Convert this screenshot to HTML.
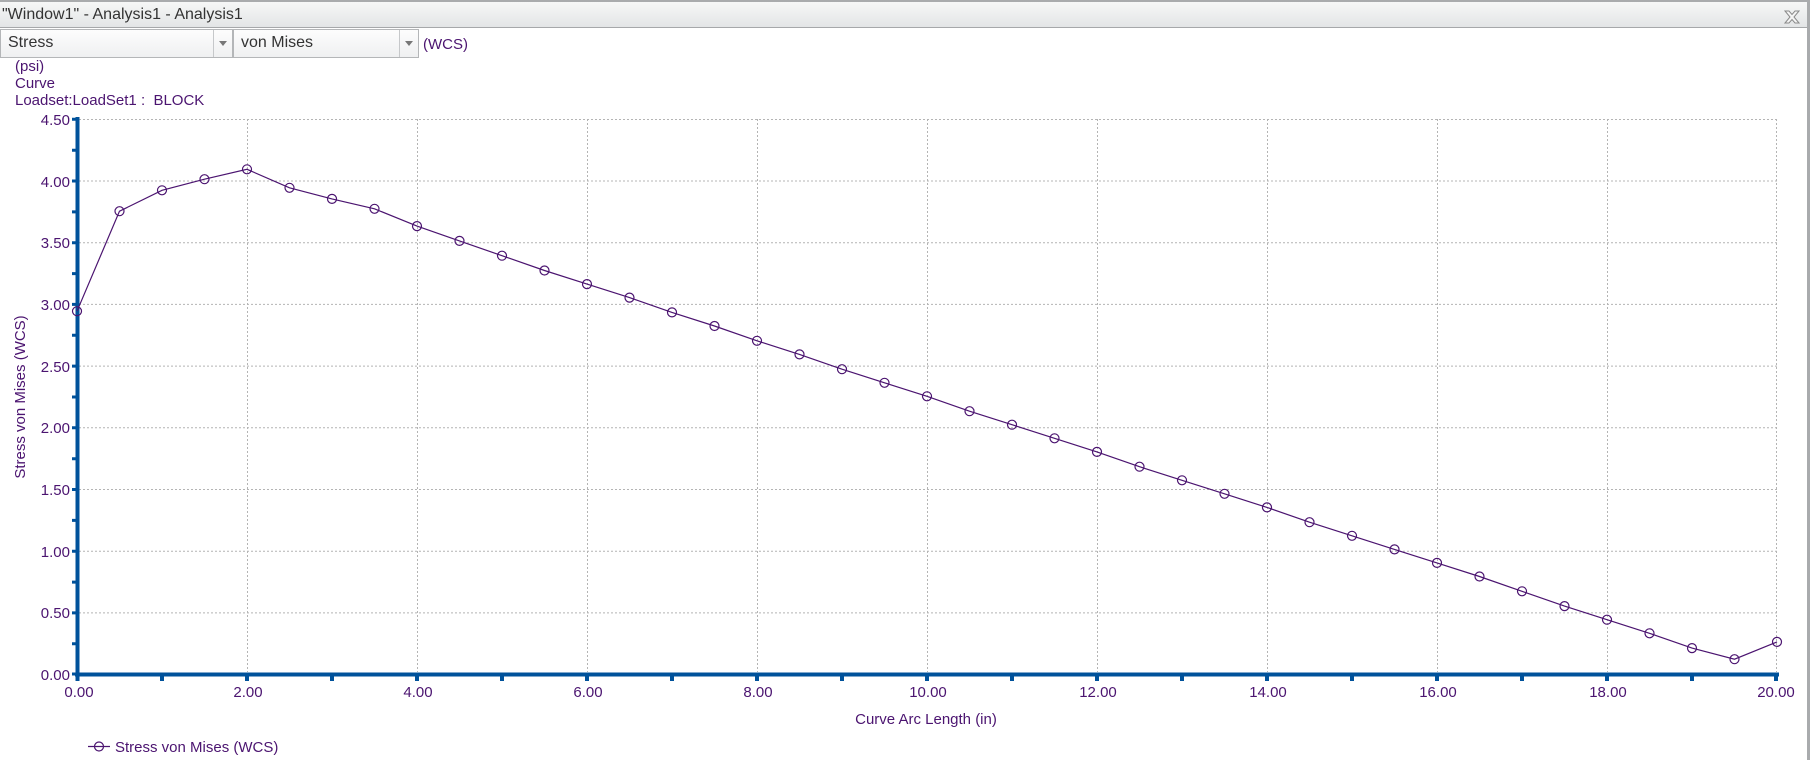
<!DOCTYPE html>
<html><head><meta charset="utf-8"><style>
html,body{margin:0;padding:0;width:1810px;height:760px;overflow:hidden;background:#fff;font-family:"Liberation Sans",Arial,sans-serif;}
.title{position:absolute;left:0;top:0;width:1807px;height:28px;background:linear-gradient(#f6f7f7,#e3e5e6);border-top:2px solid #a9abad;border-bottom:1px solid #a6a8aa;box-sizing:border-box;}
.title span{position:absolute;left:2px;top:4px;font-size:16px;color:#333;}
.rb{position:absolute;left:1807px;top:0;width:3px;height:760px;background:#a9abad;}
.dd{position:absolute;top:29px;height:29px;box-sizing:border-box;border:1px solid #b4b6b8;background:linear-gradient(#fdfdfd,#eff0f1);font-size:16px;color:#333;}
.dd span{position:absolute;left:7px;top:4px;}
.dd i{position:absolute;top:0;right:0;width:18px;height:27px;border-left:1px solid #c6c8ca;}
.dd i:after{content:"";position:absolute;left:5px;top:11px;border-left:4px solid transparent;border-right:4px solid transparent;border-top:5px solid #777;}
.p{position:absolute;color:#4b1470;font-size:15px;white-space:pre;}
</style></head><body>
<div class="title"><span>"Window1" - Analysis1 - Analysis1</span>
<svg style="position:absolute;left:1784px;top:8px" width="16" height="14" viewBox="0 0 16 14"><path d="M1 1 L5 1 L8 4.5 L11 1 L15 1 L10 7 L15 13 L11 13 L8 9.5 L5 13 L1 13 L6 7 Z" fill="#f4f4f4" stroke="#8a8a8a" stroke-width="1"/></svg></div>
<div class="rb"></div>
<div class="dd" style="left:0;width:233px"><span>Stress</span><i></i></div>
<div class="dd" style="left:233px;width:186px"><span>von Mises</span><i></i></div>
<div class="p" style="left:423px;top:36px;font-size:15px">(WCS)</div>
<div class="p" style="left:15px;top:58px">(psi)</div>
<div class="p" style="left:15px;top:75px">Curve</div>
<div class="p" style="left:15px;top:92px">Loadset:LoadSet1 :  BLOCK</div>
<svg style="position:absolute;left:0;top:0" width="1810" height="760">
<g stroke="#b4b4b4" stroke-width="1" stroke-dasharray="2,2" fill="none">
<path d="M79 119.5H1777M79 181H1777M79 242.7H1777M79 304.4H1777M79 366.1H1777M79 427.8H1777M79 489.5H1777M79 551.2H1777M79 612.9H1777"/>
<path d="M247.5 119V672M417.5 119V672M587.5 119V672M757.5 119V672M927.5 119V672M1097.5 119V672M1267.5 119V672M1437.5 119V672M1607.5 119V672M1776.5 119V672"/>
</g>
<g stroke="#00529b" fill="none">
<path d="M77.5 117V677" stroke-width="4"/>
<path d="M75 674.5H1779" stroke-width="4"/>
<path d="M72 119.3H77M72 150.2H77M72 181H77M72 211.9H77M72 242.7H77M72 273.6H77M72 304.4H77M72 335.3H77M72 366.1H77M72 397H77M72 427.8H77M72 458.7H77M72 489.5H77M72 520.4H77M72 551.2H77M72 582.1H77M72 612.9H77M72 643.8H77M72 674H77" stroke-width="3"/>
<path d="M77.5 674V681M162 674V681M247 674V681M332 674V681M417 674V681M502 674V681M587 674V681M672 674V681M757 674V681M842 674V681M927 674V681M1012 674V681M1097 674V681M1182 674V681M1267 674V681M1352 674V681M1437 674V681M1522 674V681M1607 674V681M1692 674V681M1776 674V681" stroke-width="4"/>
</g>
<g fill="#4b1470" font-size="15" font-family="Liberation Sans,Arial,sans-serif" text-anchor="end">
<text x="70" y="125">4.50</text><text x="70" y="187">4.00</text><text x="70" y="248">3.50</text><text x="70" y="310">3.00</text><text x="70" y="372">2.50</text><text x="70" y="433">2.00</text><text x="70" y="495">1.50</text><text x="70" y="557">1.00</text><text x="70" y="618">0.50</text><text x="70" y="680">0.00</text>
</g>
<g fill="#4b1470" font-size="15" font-family="Liberation Sans,Arial,sans-serif" text-anchor="middle">
<text x="79" y="697">0.00</text><text x="248" y="697">2.00</text><text x="418" y="697">4.00</text><text x="588" y="697">6.00</text><text x="758" y="697">8.00</text><text x="928" y="697">10.00</text><text x="1098" y="697">12.00</text><text x="1268" y="697">14.00</text><text x="1438" y="697">16.00</text><text x="1608" y="697">18.00</text><text x="1776" y="697">20.00</text>
<text x="926" y="724">Curve Arc Length (in)</text>
<text transform="translate(25,397) rotate(-90)">Stress von Mises (WCS)</text>
</g>
<g stroke="#4b1470" stroke-width="1.2" fill="none">
<polyline points="77,311.2 119.5,211.2 162,190.3 204.5,179.2 247,169.3 289.5,187.8 332,198.9 374.5,208.8 417,226.1 459.5,240.9 502,255.7 544.5,270.5 587,284.1 629.5,297.6 672,312.4 714.5,326 757,340.8 799.5,354.4 842,369.2 884.5,382.8 927,396.3 969.5,411.2 1012,424.7 1054.5,438.3 1097,451.9 1139.5,466.7 1182,480.3 1224.5,493.8 1267,507.4 1309.5,522.2 1352,535.8 1394.5,549.4 1437,562.9 1479.5,576.5 1522,591.3 1564.5,606.1 1607,619.7 1649.5,633.3 1692,648.1 1734.5,659.2 1777,641.9"/>
<g>
<circle cx="77" cy="311.2" r="4.5"/><circle cx="119.5" cy="211.2" r="4.5"/><circle cx="162" cy="190.3" r="4.5"/><circle cx="204.5" cy="179.2" r="4.5"/><circle cx="247" cy="169.3" r="4.5"/><circle cx="289.5" cy="187.8" r="4.5"/><circle cx="332" cy="198.9" r="4.5"/><circle cx="374.5" cy="208.8" r="4.5"/><circle cx="417" cy="226.1" r="4.5"/><circle cx="459.5" cy="240.9" r="4.5"/><circle cx="502" cy="255.7" r="4.5"/><circle cx="544.5" cy="270.5" r="4.5"/><circle cx="587" cy="284.1" r="4.5"/><circle cx="629.5" cy="297.6" r="4.5"/><circle cx="672" cy="312.4" r="4.5"/><circle cx="714.5" cy="326" r="4.5"/><circle cx="757" cy="340.8" r="4.5"/><circle cx="799.5" cy="354.4" r="4.5"/><circle cx="842" cy="369.2" r="4.5"/><circle cx="884.5" cy="382.8" r="4.5"/><circle cx="927" cy="396.3" r="4.5"/><circle cx="969.5" cy="411.2" r="4.5"/><circle cx="1012" cy="424.7" r="4.5"/><circle cx="1054.5" cy="438.3" r="4.5"/><circle cx="1097" cy="451.9" r="4.5"/><circle cx="1139.5" cy="466.7" r="4.5"/><circle cx="1182" cy="480.3" r="4.5"/><circle cx="1224.5" cy="493.8" r="4.5"/><circle cx="1267" cy="507.4" r="4.5"/><circle cx="1309.5" cy="522.2" r="4.5"/><circle cx="1352" cy="535.8" r="4.5"/><circle cx="1394.5" cy="549.4" r="4.5"/><circle cx="1437" cy="562.9" r="4.5"/><circle cx="1479.5" cy="576.5" r="4.5"/><circle cx="1522" cy="591.3" r="4.5"/><circle cx="1564.5" cy="606.1" r="4.5"/><circle cx="1607" cy="619.7" r="4.5"/><circle cx="1649.5" cy="633.3" r="4.5"/><circle cx="1692" cy="648.1" r="4.5"/><circle cx="1734.5" cy="659.2" r="4.5"/><circle cx="1777" cy="641.9" r="4.5"/>
</g>
<path d="M88 746.5H110"/><circle cx="99" cy="746.5" r="4.5"/>
</g>
<text x="115" y="752" fill="#4b1470" font-size="15" font-family="Liberation Sans,Arial,sans-serif">Stress von Mises (WCS)</text>
</svg>
</body></html>
